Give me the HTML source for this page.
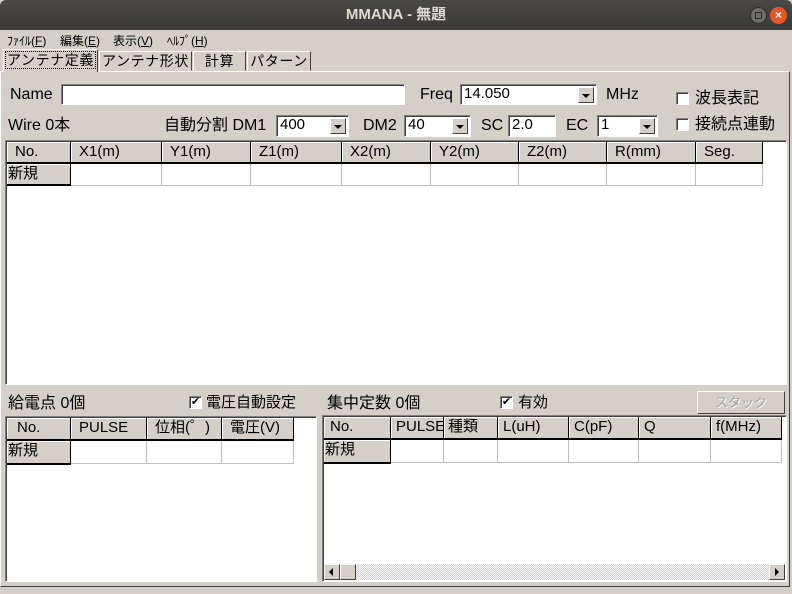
<!DOCTYPE html>
<html><head><meta charset="utf-8"><style>
*{margin:0;padding:0;box-sizing:border-box}
body{width:792px;height:594px;background:#d4d0c8;position:relative;overflow:hidden;font-family:"Liberation Sans","Noto Sans CJK JP",sans-serif;color:#000}
.a{position:absolute;white-space:nowrap}
.t{font-size:16px;line-height:18px}
.s{font-size:15px;line-height:16px}
.in{position:absolute;background:#fff;border:1px solid;border-color:#808080 #fff #fff #808080;box-shadow:inset 1px 1px 0 #404040;font-size:15px;line-height:18px;padding-left:3px}
.btn{position:absolute;right:2px;top:2px;width:16px;height:16px;background:#d4d0c8;border:1px solid;border-color:#fff #404040 #404040 #fff}
.btn:after{content:"";position:absolute;left:3px;top:6px;border:4px solid transparent;border-top:4px solid #000;border-bottom:0}
.cb{position:absolute;width:13px;height:13px;background:#fff;border:1px solid;border-color:#808080 #fff #fff #808080;box-shadow:inset 1px 1px 0 #404040;font-size:11px;line-height:10px;text-align:center}
.grid{position:absolute;background:#fff;border:1px solid;border-color:#808080 #fff #fff #808080;box-shadow:inset 1px 1px 0 #404040}
.h{position:absolute;background:#d4d0c8;border-right:1px solid #000;border-bottom:2px solid #000;box-shadow:inset 1px 1px 0 #fff;font-size:15px;line-height:20px;padding-left:8px;overflow:hidden;white-space:nowrap}
.c{position:absolute;border-right:1px solid #c0c0c0;border-bottom:1px solid #c0c0c0}
.tab{position:absolute;top:51px;height:20px;background:#d4d0c8;border:1px solid;border-color:#fff #404040 transparent #fff;font-size:14px;letter-spacing:0.6px;line-height:18px;text-align:center;white-space:nowrap;overflow:hidden}
</style></head><body>
<div class="a" style="left:0;top:0;width:792px;height:30px;background:linear-gradient(#4a4945,#3a3935);border-radius:6px 6px 0 0"></div>
<div class="a" style="left:0;top:6px;width:792px;text-align:center;color:#dfdbd2;font-weight:bold;font-size:15px;line-height:18px">MMANA - 無題</div>
<div class="a" style="left:750px;top:7px;width:17px;height:17px;border-radius:50%;background:#6e6d68;border:1px solid #2f2e2b"></div>
<div class="a" style="left:755px;top:12px;width:7px;height:7px;border:1px solid #2a2a2a"></div>
<div class="a" style="left:770px;top:7px;width:17px;height:17px;border-radius:50%;background:#e4572a;color:#fff;font-size:12px;line-height:16px;text-align:center;font-weight:bold">×</div>

<div class="a" style="left:7px;top:34px;font-size:12px;line-height:14px">ﾌｧｲﾙ(<u>F</u>)</div>
<div class="a" style="left:60px;top:34px;font-size:12px;line-height:14px">編集(<u>E</u>)</div>
<div class="a" style="left:113px;top:34px;font-size:12px;line-height:14px">表示(<u>V</u>)</div>
<div class="a" style="left:167px;top:34px;font-size:12px;line-height:14px">ﾍﾙﾌﾟ(<u>H</u>)</div>

<div class="a" style="left:0;top:71px;width:790px;height:516px;border:1px solid;border-color:#fff #404040 #404040 #fff"></div>
<div class="tab" style="left:3px;top:49px;width:95px;height:23px;border-bottom:none;z-index:2;line-height:20px"><span style="outline:1px dotted #000;padding:0 1px">アンテナ定義</span></div>
<div class="tab" style="left:99px;width:93px">アンテナ形状</div>
<div class="tab" style="left:193px;width:53px">計算</div>
<div class="tab" style="left:247px;width:64px">パターン</div>

<div class="a t" style="left:10px;top:86px">Name</div>
<div class="in" style="left:61px;top:84px;width:344px;height:21px"></div>
<div class="a t" style="left:420px;top:86px">Freq</div>
<div class="in" style="left:460px;top:84px;width:137px;height:21px">14.050<div class="btn"></div></div>
<div class="a t" style="left:606px;top:86px">MHz</div>
<div class="cb" style="left:676px;top:92px"></div>
<div class="a t" style="left:695px;top:90px">波長表記</div>

<div class="a t" style="left:8px;top:117px">Wire 0本</div>
<div class="a t" style="left:164px;top:117px">自動分割 DM1</div>
<div class="in" style="left:276px;top:115px;width:73px;height:22px">400<div class="btn"></div></div>
<div class="a t" style="left:363px;top:117px">DM2</div>
<div class="in" style="left:404px;top:115px;width:67px;height:22px">40<div class="btn"></div></div>
<div class="a t" style="left:481px;top:117px">SC</div>
<div class="in" style="left:508px;top:115px;width:48px;height:22px">2.0</div>
<div class="a t" style="left:566px;top:117px">EC</div>
<div class="in" style="left:597px;top:115px;width:61px;height:22px">1<div class="btn"></div></div>
<div class="cb" style="left:676px;top:118px"></div>
<div class="a t" style="left:695px;top:116px">接続点連動</div>

<div class="grid" style="left:5px;top:140px;width:782px;height:245px"></div>
<div class="h" style="left:7px;top:142px;width:64px;height:22px;padding-left:8px">No.</div>
<div class="h" style="left:71px;top:142px;width:91px;height:22px">X1(m)</div>
<div class="h" style="left:162px;top:142px;width:89px;height:22px">Y1(m)</div>
<div class="h" style="left:251px;top:142px;width:91px;height:22px">Z1(m)</div>
<div class="h" style="left:342px;top:142px;width:89px;height:22px">X2(m)</div>
<div class="h" style="left:431px;top:142px;width:88px;height:22px">Y2(m)</div>
<div class="h" style="left:519px;top:142px;width:88px;height:22px">Z2(m)</div>
<div class="h" style="left:607px;top:142px;width:89px;height:22px">R(mm)</div>
<div class="h" style="left:696px;top:142px;width:67px;height:22px">Seg.</div>
<div class="h" style="left:7px;top:164px;width:64px;height:22px;padding-left:1px">新規</div>
<div class="c" style="left:71px;top:164px;width:91px;height:22px"></div>
<div class="c" style="left:162px;top:164px;width:89px;height:22px"></div>
<div class="c" style="left:251px;top:164px;width:91px;height:22px"></div>
<div class="c" style="left:342px;top:164px;width:89px;height:22px"></div>
<div class="c" style="left:431px;top:164px;width:88px;height:22px"></div>
<div class="c" style="left:519px;top:164px;width:88px;height:22px"></div>
<div class="c" style="left:607px;top:164px;width:89px;height:22px"></div>
<div class="c" style="left:696px;top:164px;width:67px;height:22px"></div>

<div class="a t" style="left:8px;top:395px">給電点 0個</div>
<div class="cb" style="left:189px;top:396px">✔</div>
<div class="a s" style="left:206px;top:395px">電圧自動設定</div>
<div class="grid" style="left:5px;top:416px;width:312px;height:166px"></div>
<div class="h" style="left:7px;top:418px;width:64px;height:23px;padding-left:10px">No.</div>
<div class="h" style="left:71px;top:418px;width:76px;height:23px">PULSE</div>
<div class="h" style="left:147px;top:418px;width:75px;height:23px">位相(゜)</div>
<div class="h" style="left:222px;top:418px;width:72px;height:23px">電圧(V)</div>
<div class="h" style="left:7px;top:441px;width:64px;height:24px;padding-left:1px">新規</div>
<div class="c" style="left:71px;top:441px;width:76px;height:23px"></div>
<div class="c" style="left:147px;top:441px;width:75px;height:23px"></div>
<div class="c" style="left:222px;top:441px;width:72px;height:23px"></div>

<div class="a t" style="left:327px;top:395px">集中定数 0個</div>
<div class="cb" style="left:500px;top:396px">✔</div>
<div class="a s" style="left:518px;top:395px">有効</div>
<div class="a" style="left:697px;top:391px;width:88px;height:23px;border:1px solid;border-color:#fff #404040 #404040 #fff;color:#a0a0a0;font-size:13px;line-height:21px;text-align:center;text-shadow:1px 1px 0 #fff">スタック</div>
<div class="grid" style="left:322px;top:415px;width:465px;height:167px"></div>
<div class="h" style="left:324px;top:417px;width:67px;height:23px;padding-left:6px">No.</div>
<div class="h" style="left:391px;top:417px;width:53px;height:23px;padding-left:5px">PULSE</div>
<div class="h" style="left:444px;top:417px;width:54px;height:23px;padding-left:4px">種類</div>
<div class="h" style="left:498px;top:417px;width:71px;height:23px;padding-left:5px">L(uH)</div>
<div class="h" style="left:569px;top:417px;width:70px;height:23px;padding-left:5px">C(pF)</div>
<div class="h" style="left:639px;top:417px;width:72px;height:23px;padding-left:5px">Q</div>
<div class="h" style="left:711px;top:417px;width:71px;height:23px;padding-left:5px">f(MHz)</div>
<div class="h" style="left:324px;top:440px;width:67px;height:24px;padding-left:1px">新規</div>
<div class="c" style="left:391px;top:440px;width:53px;height:23px"></div>
<div class="c" style="left:444px;top:440px;width:54px;height:23px"></div>
<div class="c" style="left:498px;top:440px;width:71px;height:23px"></div>
<div class="c" style="left:569px;top:440px;width:70px;height:23px"></div>
<div class="c" style="left:639px;top:440px;width:72px;height:23px"></div>
<div class="c" style="left:711px;top:440px;width:71px;height:23px"></div>
<div class="a" style="left:324px;top:564px;width:461px;height:16px;background:repeating-conic-gradient(#d4d0c8 0 25%,#fff 0 50%) 0 0/2px 2px"></div>
<div class="a" style="left:324px;top:564px;width:16px;height:16px;background:#d4d0c8;border:1px solid;border-color:#fff #404040 #404040 #fff"></div>
<div class="a" style="left:329px;top:568px;border:4px solid transparent;border-right:4px solid #000;border-left:0"></div>
<div class="a" style="left:340px;top:564px;width:16px;height:16px;background:#d4d0c8;border:1px solid;border-color:#fff #404040 #404040 #fff"></div>
<div class="a" style="left:769px;top:564px;width:16px;height:16px;background:#d4d0c8;border:1px solid;border-color:#fff #404040 #404040 #fff"></div>
<div class="a" style="left:775px;top:568px;border:4px solid transparent;border-left:4px solid #000;border-right:0"></div>
</body></html>
